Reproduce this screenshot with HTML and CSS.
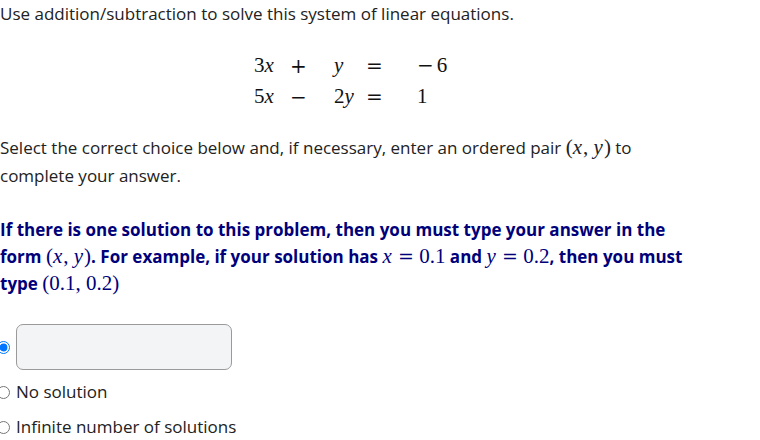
FILE: index.html
```html
<!DOCTYPE html>
<html lang="en">
<head>
<meta charset="utf-8">
<title>System of linear equations</title>
<link rel="stylesheet" href="styles.css">
</head>
<body>
<main class="question">
  <p class="prompt">Use addition/subtraction to solve this system of linear equations.</p>

  <div class="system">
    <span class="math">3<i>x</i></span><span class="math op">+</span><span class="math"><i>y</i></span><span class="math op">=</span><span class="math"><span class="op neg">−</span>6</span>
    <span class="math">5<i>x</i></span><span class="math op">−</span><span class="math">2<i>y</i></span><span class="math op">=</span><span class="math">1</span>
  </div>

  <p class="instructions">Select the correct choice below and, if necessary, enter an ordered pair <span class="math">(<i>x</i>, <i>y</i>)</span> to complete your answer.</p>

  <p class="note">If there is one solution to this problem, then you must type your answer in the form <span class="math">(<i>x</i>, <i>y</i>)</span>. For example, if your solution has <span class="math"><i>x</i> <span class="op">=</span> 0.1</span> and <span class="math"><i>y</i> <span class="op">=</span> 0.2</span>, then you must type <span class="math">(0.1, 0.2)</span></p>

  <div class="choices">
    <label class="choice choice-input">
      <input type="radio" name="answer" checked>
      <span class="answer-box"></span>
    </label>
    <label class="choice">
      <input type="radio" name="answer">
      <span>No solution</span>
    </label>
    <label class="choice">
      <input type="radio" name="answer">
      <span>Infinite number of solutions</span>
    </label>
  </div>
</main>
</body>
</html>
```

FILE: styles.css
```css
html, body {
  margin: 0;
  padding: 0;
  background: #ffffff;
}

body {
  font-family: "Open Sans", "Noto Sans", sans-serif;
  font-size: 17px;
  color: #222222;
}

.question {
  width: 700px;
  padding-top: 2px;
}

p {
  margin: 0;
}

.prompt {
  line-height: 24px;
}

.math {
  font-family: "Liberation Serif", "DejaVu Serif", serif;
  font-size: 21px;
  font-weight: normal;
  line-height: 1;
  white-space: nowrap;
}

.math i {
  font-style: italic;
  padding-right: 1px;
}

.op {
  font-family: "DejaVu Serif", "Liberation Serif", serif;
  font-size: 19px;
}

.system {
  display: grid;
  grid-template-columns: 36px 44px 32px 51px auto;
  grid-auto-rows: 31px;
  align-items: center;
  margin: 24px 0 0 254px;
  width: 200px;
  color: #111111;
}

.system .op {
  font-size: 20px;
}

.neg {
  margin-right: 3px;
}

.instructions {
  margin-top: 22px;
  line-height: 28px;
}

.note {
  margin-top: 26px;
  line-height: 27px;
  font-weight: bold;
  color: #00007a;
}

.choices {
  margin-top: 27px;
  display: flex;
  flex-direction: column;
}

.choice {
  display: flex;
  align-items: center;
  gap: 6px;
  margin-left: -3px;
  line-height: 24px;
}

.choice + .choice {
  margin-top: 10px;
}

.choice:last-child {
  margin-top: 11px;
}

.choice input {
  margin: 0;
  width: 13px;
  height: 13px;
}

.choice-input {
  height: 46px;
}

.answer-box {
  display: block;
  width: 214px;
  height: 44px;
  border: 1px solid #9a9a9a;
  border-radius: 7px;
  background: #f3f4f6;
}
```
